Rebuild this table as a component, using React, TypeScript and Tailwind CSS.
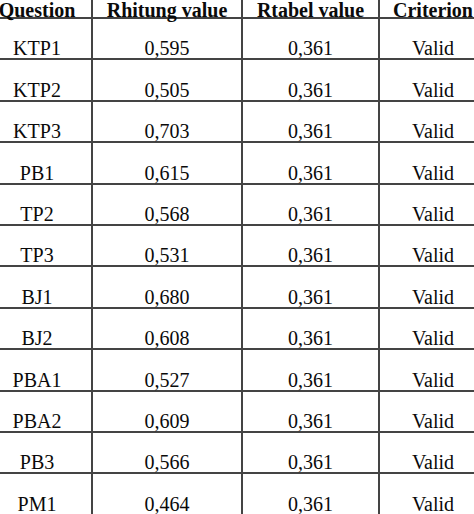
const rows = [
  ['KTP1', '0,595'],
  ['KTP2', '0,505'],
  ['KTP3', '0,703'],
  ['PB1', '0,615'],
  ['TP2', '0,568'],
  ['TP3', '0,531'],
  ['BJ1', '0,680'],
  ['BJ2', '0,608'],
  ['PBA1', '0,527'],
  ['PBA2', '0,609'],
  ['PB3', '0,566'],
  ['PM1', '0,464'],
]

const cols = 'grid grid-cols-[110px_150px_137px_106px]'
const cell = 'flex items-end justify-center leading-[20px] border-r-2 border-[#444]'
const lastCell = 'flex items-end justify-center leading-[20px]'

export default function App() {
  return (
    <div className="w-[474px] h-[514px] overflow-hidden bg-white text-[#0a0a0a] font-['Liberation_Serif',serif] text-[20px]">
      <div className="ml-[-17px] w-[503px]">
        <div className={`${cols} h-[19px] border-b-2 border-[#444] font-bold`}>
          <div className={`${cell} pb-[2px]`}>Question</div>
          <div className={`${cell} pb-[2px]`}>Rhitung value</div>
          <div className={`${cell} pb-[2px]`}>Rtabel value</div>
          <div className={`${lastCell} pb-[2px]`}>Criterion</div>
        </div>
        {rows.map(([q, r]) => (
          <div key={q} className={`${cols} h-[41.4px] border-b-2 border-[#444]`}>
            <div className={cell}>{q}</div>
            <div className={cell}>{r}</div>
            <div className={cell}>0,361</div>
            <div className={lastCell}>Valid</div>
          </div>
        ))}
      </div>
    </div>
  )
}
